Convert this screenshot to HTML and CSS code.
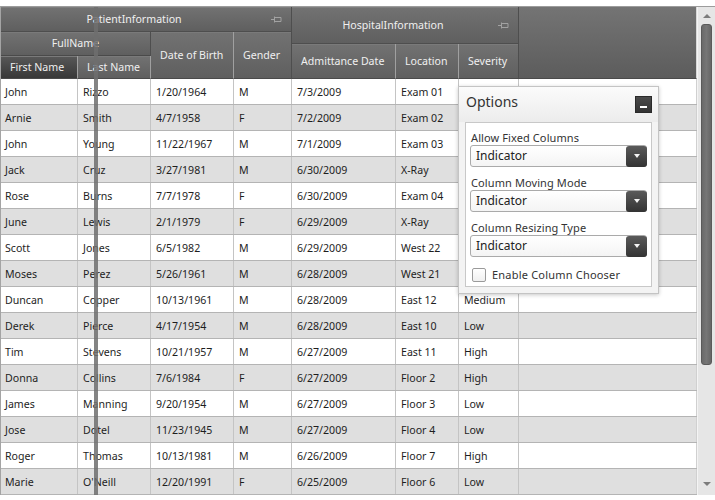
FILE: index.html
```html
<!DOCTYPE html>
<html>
<head>
<meta charset="utf-8">
<link rel="stylesheet" href="styles.css">
</head>
<body>
<div class="page">
  <div class="grid-wrap">
    <div class="grid">
      <div class="header">
        <div class="hc band band-patient"><span class="band-text">PatientInformation</span><span class="pin"><svg width="11" height="7" viewBox="0 0 11 7"><path d="M0 3.5h3.5M3.5 0.5v6M4 1.5h6v4h-6" fill="none" stroke="#a2a2a2" stroke-width="1"/></svg></span></div>
        <div class="hc group group-full">FullName</div>
        <div class="hc leaf leaf-first active">First Name</div>
        <div class="hc leaf leaf-last">Last Name</div>
        <div class="hc leaf leaf-dob">Date of Birth</div>
        <div class="hc leaf leaf-gender">Gender</div>
        <div class="hc band band-hospital"><span class="band-text">HospitalInformation</span><span class="pin"><svg width="11" height="7" viewBox="0 0 11 7"><path d="M0 3.5h3.5M3.5 0.5v6M4 1.5h6v4h-6" fill="none" stroke="#a2a2a2" stroke-width="1"/></svg></span></div>
        <div class="hc leaf leaf-adm">Admittance Date</div>
        <div class="hc leaf leaf-loc">Location</div>
        <div class="hc leaf leaf-sev">Severity</div>
        <div class="hc filler"></div>
      </div>
      <div class="body">
        <div class="row"><span>John</span><span>Rizzo</span><span>1/20/1964</span><span>M</span><span>7/3/2009</span><span>Exam 01</span><span></span><span></span></div>
        <div class="row alt"><span>Arnie</span><span>Smith</span><span>4/7/1958</span><span>F</span><span>7/2/2009</span><span>Exam 02</span><span></span><span></span></div>
        <div class="row"><span>John</span><span>Young</span><span>11/22/1967</span><span>M</span><span>7/1/2009</span><span>Exam 03</span><span></span><span></span></div>
        <div class="row alt"><span>Jack</span><span>Cruz</span><span>3/27/1981</span><span>M</span><span>6/30/2009</span><span>X-Ray</span><span></span><span></span></div>
        <div class="row"><span>Rose</span><span>Burns</span><span>7/7/1978</span><span>F</span><span>6/30/2009</span><span>Exam 04</span><span></span><span></span></div>
        <div class="row alt"><span>June</span><span>Lewis</span><span>2/1/1979</span><span>F</span><span>6/29/2009</span><span>X-Ray</span><span></span><span></span></div>
        <div class="row"><span>Scott</span><span>Jones</span><span>6/5/1982</span><span>M</span><span>6/29/2009</span><span>West 22</span><span></span><span></span></div>
        <div class="row alt"><span>Moses</span><span>Perez</span><span>5/26/1961</span><span>M</span><span>6/28/2009</span><span>West 21</span><span></span><span></span></div>
        <div class="row"><span>Duncan</span><span>Copper</span><span>10/13/1961</span><span>M</span><span>6/28/2009</span><span>East 12</span><span>Medium</span><span></span></div>
        <div class="row alt"><span>Derek</span><span>Pierce</span><span>4/17/1954</span><span>M</span><span>6/28/2009</span><span>East 10</span><span>Low</span><span></span></div>
        <div class="row"><span>Tim</span><span>Stevens</span><span>10/21/1957</span><span>M</span><span>6/27/2009</span><span>East 11</span><span>High</span><span></span></div>
        <div class="row alt"><span>Donna</span><span>Collins</span><span>7/6/1984</span><span>F</span><span>6/27/2009</span><span>Floor 2</span><span>High</span><span></span></div>
        <div class="row"><span>James</span><span>Manning</span><span>9/20/1954</span><span>M</span><span>6/27/2009</span><span>Floor 3</span><span>Low</span><span></span></div>
        <div class="row alt"><span>Jose</span><span>Dotel</span><span>11/23/1945</span><span>M</span><span>6/27/2009</span><span>Floor 4</span><span>Low</span><span></span></div>
        <div class="row"><span>Roger</span><span>Thomas</span><span>10/13/1981</span><span>M</span><span>6/26/2009</span><span>Floor 7</span><span>High</span><span></span></div>
        <div class="row alt"><span>Marie</span><span>O'Neill</span><span>12/20/1991</span><span>F</span><span>6/25/2009</span><span>Floor 6</span><span>Low</span><span></span></div>
      </div>
    </div>
    <div class="vscroll">
      <div class="arrow up"></div>
      <div class="track"><div class="thumb"></div></div>
      <div class="arrow down"></div>
    </div>
    <div class="move-indicator"></div>
    <div class="options">
      <div class="opt-head">
        <span class="opt-title">Options</span>
        <span class="opt-min"><span class="dash"></span></span>
      </div>
      <div class="opt-body">
        <div class="field">
          <div class="label">Allow Fixed Columns</div>
          <div class="combo"><span class="combo-text">Indicator</span><span class="combo-btn"><span class="tri"></span></span></div>
        </div>
        <div class="field">
          <div class="label">Column Moving Mode</div>
          <div class="combo"><span class="combo-text">Indicator</span><span class="combo-btn"><span class="tri"></span></span></div>
        </div>
        <div class="field">
          <div class="label">Column Resizing Type</div>
          <div class="combo"><span class="combo-text">Indicator</span><span class="combo-btn"><span class="tri"></span></span></div>
        </div>
        <div class="check-row"><span class="checkbox"></span><span class="check-label">Enable Column Chooser</span></div>
      </div>
    </div>
  </div>
</div>
</body>
</html>
```
FILE: styles.css
```css
* { box-sizing: border-box; }
html, body { margin: 0; padding: 0; background: #fff; }
body { font-family: "Noto Sans", "Open Sans", sans-serif; font-size: 11px; color: #222; }
.page { padding-top: 6px; width: 715px; height: 500px; }
.grid-wrap {
  position: relative;
  display: flex;
  width: 715px;
  height: 489px;
  border-top: 1px solid #9c9c9c;
  border-left: 1px solid #a4a4a4;
}
.grid { width: 696px; display: flex; flex-direction: column; font-size: 10.6px; }
.header {
  display: grid;
  grid-template-columns: 77px 73px 83px 58px 104px 63px 60px 178px;
  grid-template-rows: 25px 12px 12px 23px;
  height: 72px;
}
.hc {
  color: #f0f0f0;
  background: linear-gradient(#727272, #5f5f5f);
  display: flex;
  align-items: center;
  white-space: nowrap;
  line-height: 13px;
}
.band { border-right: 1px solid #4e4e4e; border-bottom: 1px solid #4e4e4e; box-shadow: inset 0 1px 0 #7e7e7e; }
.band-text { flex: 1; text-align: center; }
.pin { width: 24px; display: flex; align-items: center; padding-left: 4px; }
.band-patient { grid-column: 1 / 5; grid-row: 1 / 2; }
.band-hospital { grid-column: 5 / 8; grid-row: 1 / 3; }
.group { justify-content: center; border-right: 1px solid #4e4e4e; border-bottom: 1px solid #4a4a4a; box-shadow: inset 0 1px 0 #7a7a7a; }
.group-full { grid-column: 1 / 3; grid-row: 2 / 4; }
.leaf { padding-left: 9px; border-right: 1px solid #a0a0a0; border-bottom: 1px solid #4a4a4a; box-shadow: inset 0 1px 0 #7a7a7a; }
.leaf-first { grid-column: 1; grid-row: 4; }
.leaf-last { grid-column: 2; grid-row: 4; }
.leaf-dob { grid-column: 3; grid-row: 2 / 5; }
.leaf-gender { grid-column: 4; grid-row: 2 / 5; border-right-color: #4e4e4e; }
.leaf-adm { grid-column: 5; grid-row: 3 / 5; }
.leaf-loc { grid-column: 6; grid-row: 3 / 5; }
.leaf-sev { grid-column: 7; grid-row: 3 / 5; border-right-color: #4e4e4e; }
.leaf.active { background: linear-gradient(#585858, #383838); }
.filler { grid-column: 8; grid-row: 1 / 5; border-bottom: 1px solid #4a4a4a; border-right: 1px solid #d8d8d8; background: linear-gradient(#747474, #5c5c5c); }
.body { display: flex; flex-direction: column; }
.row {
  display: grid;
  grid-template-columns: 77px 73px 83px 58px 104px 63px 60px 178px;
  height: 26px;
  background: #fff;
  border-bottom: 1px solid #b4b4b4;
}
.row.alt { background: #dfdfdf; }
.row span {
  display: flex;
  align-items: center;
  padding-left: 5px;
  padding-top: 1px;
  border-right: 1px solid #c4c4c4;
  color: #1e1e1e;
  white-space: nowrap;
  overflow: hidden;
  line-height: 14px;
}
.row span:first-child { padding-left: 4px; }
.row span:last-child { border-right: 1px solid #d0d0d0; }
.vscroll {
  width: 18px;
  background: #e6e6e6;
  border-left: 1px solid #f4f4f4;
  display: flex;
  flex-direction: column;
  align-items: center;
}
.arrow { width: 0; height: 0; border-left: 4px solid transparent; border-right: 4px solid transparent; }
.arrow.up { border-bottom: 4px solid #7c7c7c; margin-top: 7px; }
.arrow.down { border-top: 4px solid #7c7c7c; margin-bottom: 9px; }
.track { flex: 1; width: 100%; display: flex; justify-content: center; padding-top: 6px; }
.thumb { width: 11px; height: 341px; border-radius: 3px; background: linear-gradient(90deg, #6a6a6a, #767676 50%, #666); border: 1px solid #5a5a5a; }
.move-indicator {
  position: absolute;
  left: 93px;
  top: 0;
  width: 4px;
  height: 488px;
  background: rgba(110, 110, 110, 0.85);
}
.options {
  position: absolute;
  left: 457px;
  top: 79px;
  width: 201px;
  height: 208px;
  background: #f3f3f3;
  border: 1px solid #c4c4c4;
  box-shadow: 0 1px 4px rgba(0, 0, 0, 0.22);
  display: flex;
  flex-direction: column;
  padding: 0 6px 6px 6px;
}
.opt-head {
  height: 35px;
  margin: 0 -6px;
  padding: 0 6px 5px 7px;
  display: flex;
  align-items: center;
  justify-content: space-between;
  background: linear-gradient(#fbfbfb, #ececec);
}
.opt-title { font-size: 14px; line-height: 18px; color: #333; }
.opt-min {
  width: 17px; height: 17px;
  background: linear-gradient(#4a4a4a, #333);
  border: 1px solid #2a2a2a;
  display: flex; justify-content: center; align-items: flex-end;
  padding-bottom: 4px;
  margin-top: 4px;
}
.dash { width: 7px; height: 2px; background: #fff; }
.opt-body {
  flex: 1;
  background: #fff;
  border: 1px solid #c8c8c8;
  padding: 8px 4px 0 4px;
  display: flex;
  flex-direction: column;
  gap: 9px;
}
.label { height: 14px; line-height: 13px; color: #333; font-size: 11px; letter-spacing: 0.1px; padding-left: 1px; overflow: visible; }
.combo {
  height: 22px;
  border: 1px solid #aaa;
  border-radius: 3px;
  background: linear-gradient(#fff, #f4f4f4);
  display: flex;
  align-items: center;
  justify-content: space-between;
  padding-left: 5px;
  padding-right: 0;
}
.combo-text { font-size: 12px; line-height: 14px; color: #222; }
.combo-btn {
  width: 21px; height: 21px;
  margin-right: -1px;
  border-radius: 3px;
  background: linear-gradient(#5a5a5a, #333);
  display: flex; justify-content: center; align-items: center;
}
.tri { width: 0; height: 0; border-left: 3px solid transparent; border-right: 3px solid transparent; border-top: 4px solid #f4f4f4; }
.check-row { display: flex; align-items: center; margin-top: 2px; padding-left: 2px; }
.checkbox { width: 14px; height: 14px; border: 1px solid #9a9a9a; border-radius: 2px; background: linear-gradient(#fff, #f0f0f0); }
.check-label { margin-left: 6px; color: #333; font-size: 11px; line-height: 14px; letter-spacing: 0.2px; }
```
